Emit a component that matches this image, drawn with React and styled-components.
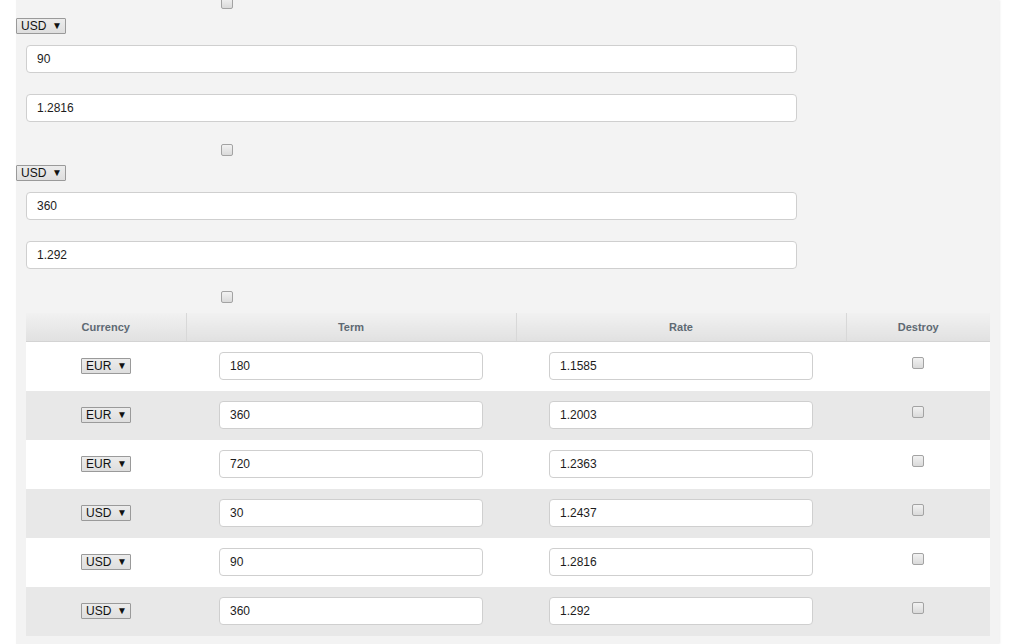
import React from 'react';
import styled, { createGlobalStyle } from 'styled-components';

const GlobalStyle = createGlobalStyle`
  html, body {
    margin: 0;
    padding: 0;
    background: #fff;
    font-family: "Liberation Sans", Arial, sans-serif;
  }
`;

const Panel = styled.div`
  margin-left: 16px;
  width: 983px;
  min-height: 644px;
  background: #f3f3f3;
  box-shadow: 1px 0 2px rgba(0, 0, 0, 0.08);
  padding: 0 9px 0 0;
  box-sizing: border-box;
  display: flex;
  flex-direction: column;
  overflow: hidden;
`;

const CheckRow = styled.div`
  height: 13px;
  margin-top: ${(p) => (p.first ? '-4px' : '0')};
  margin-bottom: 9px;
  padding-left: 205px;
  display: flex;
  align-items: center;
`;

const Check = styled.input.attrs({ type: 'checkbox' })`
  appearance: none;
  margin: 0 0 ${(p) => (p.lift ? '6px' : '0')};
  width: 12px;
  height: 12px;
  border: 1px solid #a3a3a3;
  border-radius: 2px;
  background: linear-gradient(#f2f2f2, #dadada);
  box-sizing: border-box;
`;

const SelectRow = styled.div`
  height: 16px;
  margin-bottom: 11px;
  display: flex;
`;

const SelectWrap = styled.span`
  position: relative;
  display: inline-flex;
  width: 50px;
  height: 16px;
`;

const Select = styled.select`
  appearance: none;
  display: block;
  width: 100%;
  height: 100%;
  margin: 0;
  padding: 0 0 0 4px;
  border: 1px solid #9a9a9a;
  border-radius: 1px;
  background: linear-gradient(#ececec, #dedede);
  font-family: "Liberation Sans", Arial, sans-serif;
  font-size: 12px;
  color: #111;
  box-sizing: border-box;
  line-height: 14px;
`;

const Arrow = styled.span`
  position: absolute;
  right: 4px;
  top: 1px;
  font-size: 10px;
  line-height: 14px;
  color: #111;
  pointer-events: none;
`;

const InputRow = styled.div`
  height: 28px;
  margin-bottom: 21px;
  padding-left: 10px;
  display: flex;
`;

const TextInput = styled.input`
  width: ${(p) => p.w}px;
  height: 28px;
  margin: 0;
  padding: 0 10px;
  border: 1px solid #cfcfcf;
  border-radius: 4px;
  background: #fff;
  font-family: "Liberation Sans", Arial, sans-serif;
  font-size: 12px;
  color: #1c1c1c;
  box-sizing: border-box;
  outline: none;
`;

const Table = styled.table`
  margin: 1px 0 0 10px;
  width: 964px;
  border-collapse: collapse;
  table-layout: fixed;
`;

const Th = styled.th`
  width: ${(p) => p.w}px;
  height: 28px;
  padding: 1px 0 0;
  background: linear-gradient(#f1f1f1, #e1e1e1);
  border-bottom: 1px solid #d3d3d3;
  border-left: 1px solid #d8d8d8;
  font-size: 11px;
  font-weight: bold;
  color: #5e6973;
  text-align: center;
  box-sizing: border-box;
  &:first-child {
    border-left: none;
  }
`;

const Tr = styled.tr`
  background: ${(p) => (p.alt ? '#e8e8e8' : '#fff')};
`;

const Td = styled.td`
  height: 49px;
  padding: 0;
  text-align: center;
  vertical-align: middle;
`;

const CellInner = styled.div`
  display: flex;
  justify-content: center;
  align-items: center;
`;

const CurrencySelect = ({ value }) => (
  <SelectWrap>
    <Select defaultValue={value}>
      <option>USD</option>
      <option>EUR</option>
    </Select>
    <Arrow>▼</Arrow>
  </SelectWrap>
);

const topBlocks = [
  { currency: 'USD', term: '90', rate: '1.2816' },
  { currency: 'USD', term: '360', rate: '1.292' },
];

const rows = [
  { currency: 'EUR', term: '180', rate: '1.1585' },
  { currency: 'EUR', term: '360', rate: '1.2003' },
  { currency: 'EUR', term: '720', rate: '1.2363' },
  { currency: 'USD', term: '30', rate: '1.2437' },
  { currency: 'USD', term: '90', rate: '1.2816' },
  { currency: 'USD', term: '360', rate: '1.292' },
];

export default function App() {
  return (
    <>
      <GlobalStyle />
      <Panel>
        <CheckRow first>
          <Check />
        </CheckRow>
        {topBlocks.map((b, i) => (
          <React.Fragment key={i}>
            <SelectRow>
              <CurrencySelect value={b.currency} />
            </SelectRow>
            <InputRow>
              <TextInput w={771} defaultValue={b.term} />
            </InputRow>
            <InputRow>
              <TextInput w={771} defaultValue={b.rate} />
            </InputRow>
            <CheckRow>
              <Check />
            </CheckRow>
          </React.Fragment>
        ))}
        <Table>
          <thead>
            <tr>
              <Th w={160}>Currency</Th>
              <Th w={330}>Term</Th>
              <Th w={330}>Rate</Th>
              <Th w={144}>Destroy</Th>
            </tr>
          </thead>
          <tbody>
            {rows.map((r, i) => (
              <Tr key={i} alt={i % 2 === 1}>
                <Td>
                  <CellInner>
                    <CurrencySelect value={r.currency} />
                  </CellInner>
                </Td>
                <Td>
                  <CellInner>
                    <TextInput w={264} defaultValue={r.term} />
                  </CellInner>
                </Td>
                <Td>
                  <CellInner>
                    <TextInput w={264} defaultValue={r.rate} />
                  </CellInner>
                </Td>
                <Td>
                  <CellInner>
                    <Check lift />
                  </CellInner>
                </Td>
              </Tr>
            ))}
          </tbody>
        </Table>
      </Panel>
    </>
  );
}
